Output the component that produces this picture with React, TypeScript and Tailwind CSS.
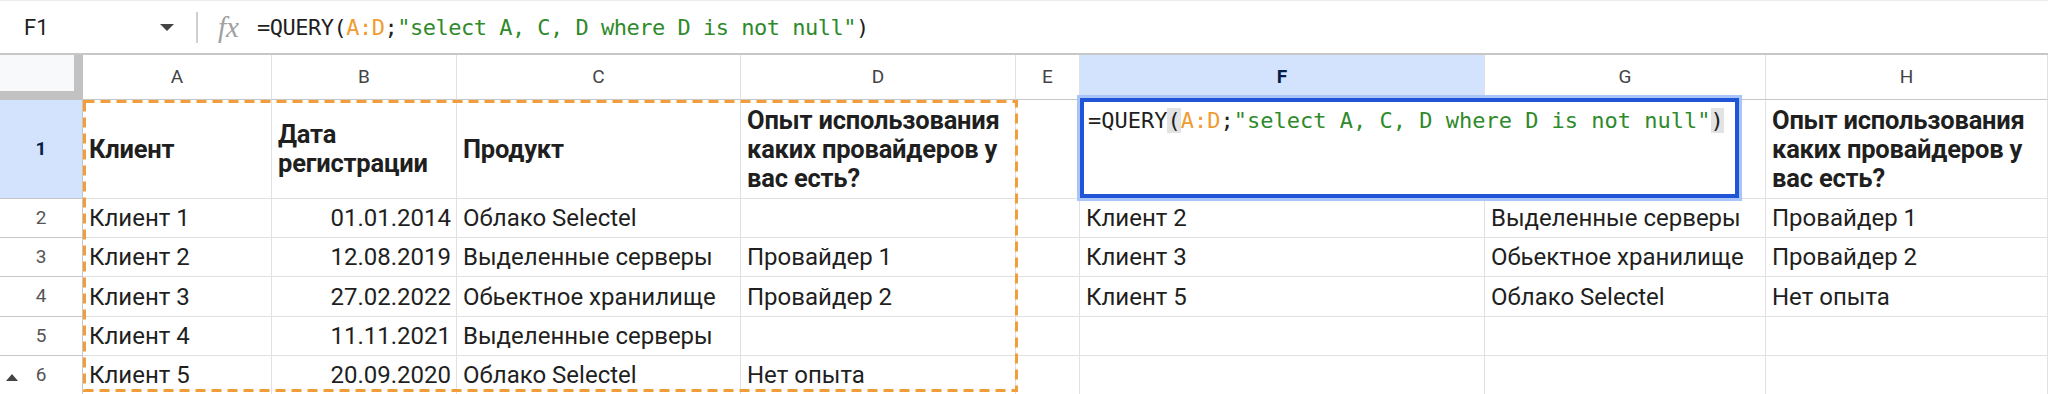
import React from "react";

const cols = ["A", "B", "C", "D", "E", "F", "G", "H"];

type Cell = { t?: string; right?: boolean; bold?: boolean };

const rows: Cell[][] = [
  [
    { t: "Клиент", bold: true },
    { t: "Дата регистрации", bold: true },
    { t: "Продукт", bold: true },
    { t: "Опыт использования каких провайдеров у вас есть?", bold: true },
    {},
    {},
    {},
    { t: "Опыт использования каких провайдеров у вас есть?", bold: true },
  ],
  [
    { t: "Клиент 1" },
    { t: "01.01.2014", right: true },
    { t: "Облако Selectel" },
    {},
    {},
    { t: "Клиент 2" },
    { t: "Выделенные серверы" },
    { t: "Провайдер 1" },
  ],
  [
    { t: "Клиент 2" },
    { t: "12.08.2019", right: true },
    { t: "Выделенные серверы" },
    { t: "Провайдер 1" },
    {},
    { t: "Клиент 3" },
    { t: "Обьектное хранилище" },
    { t: "Провайдер 2" },
  ],
  [
    { t: "Клиент 3" },
    { t: "27.02.2022", right: true },
    { t: "Обьектное хранилище" },
    { t: "Провайдер 2" },
    {},
    { t: "Клиент 5" },
    { t: "Облако Selectel" },
    { t: "Нет опыта" },
  ],
  [
    { t: "Клиент 4" },
    { t: "11.11.2021", right: true },
    { t: "Выделенные серверы" },
    {},
    {},
    {},
    {},
    {},
  ],
  [
    { t: "Клиент 5" },
    { t: "20.09.2020", right: true },
    { t: "Облако Selectel" },
    { t: "Нет опыта" },
    {},
    {},
    {},
    {},
  ],
];

function Formula({ hl }: { hl?: boolean }) {
  return (
    <span
      className={
        "font-['DejaVu_Sans_Mono',monospace] " +
        (hl ? "tracking-normal" : "tracking-[-0.5px]")
      }
    >
      <span>=QUERY</span>
      <span className={hl ? "bg-[#e3e3e3]" : ""}>(</span>
      <span className="text-[#f09c30]">A:D</span>
      <span>;</span>
      <span className="text-[#2f8a2b]">"select A, C, D where D is not null"</span>
      <span className={hl ? "bg-[#e3e3e3]" : ""}>)</span>
    </span>
  );
}

export default function App() {
  return (
    <div className="relative w-[2048px] h-[394px] overflow-hidden bg-white text-[#1f1f1f] font-['Roboto',sans-serif]">
      {/* formula bar */}
      <div className="flex items-center h-[55px] border-t border-[#ececec] border-b-2 border-b-[#c7c7c7]">
        <div className="flex items-center justify-between w-[196px] pl-[24px] pr-[22px]">
          <span className="text-[22px]">F1</span>
          <span className="w-0 h-0 border-l-[7px] border-r-[7px] border-t-[7px] border-l-transparent border-r-transparent border-t-[#444]" />
        </div>
        <div className="w-[2px] h-[31px] bg-[#d0d0d0]" />
        <span className="ml-[20px] mr-[18px] text-[29px] italic text-[#a0a0a0] font-['Liberation_Serif',serif] leading-none">
          fx
        </span>
        <span className="text-[22px]">
          <Formula />
        </span>
      </div>

      {/* grid */}
      <div className="grid grid-cols-[83px_189px_185px_284px_275px_64px_405px_281px_282px] grid-rows-[45px_99px_39px_39px_40px_39px_39px]">
        <div className="bg-[#f8f9fa] border-r-[9px] border-b-[9px] border-[#c2c2c2]" />
        {cols.map((c) => (
          <div
            key={c}
            className={
              "flex items-center justify-center border-r border-b border-[#c4c7c5] border-r-[#e1e1e1] text-[19px] " +
              (c === "F" ? "bg-[#d3e3fd] font-bold text-[#041e49]" : "text-[#444]")
            }
          >
            {c}
          </div>
        ))}
        {rows.map((r, i) => (
          <React.Fragment key={i}>
            <div
              className={
                "relative flex items-center justify-center border-r border-b border-[#c4c7c5] text-[19px] " +
                (i === 0 ? "bg-[#d3e3fd] font-bold text-[#041e49]" : "text-[#555]")
              }
            >
              {i === 5 && (
                <span className="absolute left-[6px] top-[18px] w-0 h-0 border-l-[6px] border-r-[6px] border-b-[7px] border-l-transparent border-r-transparent border-b-[#444]" />
              )}
              {i + 1}
            </div>
            {r.map((cell, j) => (
              <div
                key={j}
                className={
                  "flex items-center border-r border-b border-[#e1e1e1] overflow-hidden " +
                  (cell.right ? "justify-end pl-[6px] pr-[5px] " : "pl-[6px] pr-[4px] ") +
                  (cell.bold
                    ? "font-bold text-[25.5px] leading-[29px] whitespace-normal tracking-[-0.2px]"
                    : "text-[24px] whitespace-nowrap")
                }
              >
                {cell.t}
              </div>
            ))}
          </React.Fragment>
        ))}
      </div>

      {/* copy selection A1:D6 */}
      <svg className="absolute left-[83px] top-[100px]" width="935" height="292">
        <rect
          x="1.5"
          y="1.5"
          width="932"
          height="289"
          fill="none"
          stroke="#f29d38"
          strokeWidth="3"
          strokeDasharray="10 6"
        />
      </svg>

      {/* active cell editor */}
      <div className="absolute left-[1080px] top-[98px] w-[659px] h-[100px] bg-white border-4 border-[#1f55d6] shadow-[0_0_0_3px_#a8c4f8] pl-[4px] pt-[5px] text-[22px] leading-[28px]">
        <Formula hl />
      </div>
    </div>
  );
}
